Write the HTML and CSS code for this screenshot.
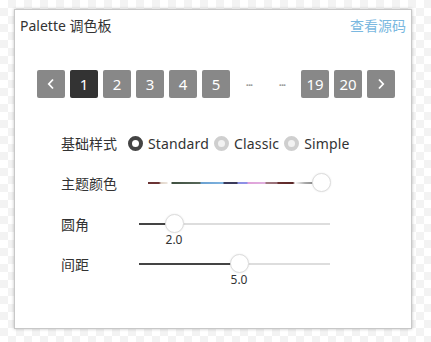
FILE: index.html
```html
<!DOCTYPE html>
<html>
<head>
<meta charset="utf-8">
<link rel="stylesheet" href="styles.css">
</head>
<body>
<div class="card">
  <div class="header">
    <span class="title">Palette 调色板</span>
    <span class="source">查看源码</span>
  </div>
  <div class="pager">
    <span class="pg nav"><svg width="10" height="12" viewBox="0 0 10 12"><path d="M7 1.5 L2.8 6 L7 10.5" fill="none" stroke="#fff" stroke-width="1.8"/></svg></span>
    <span class="pg active">1</span>
    <span class="pg">2</span>
    <span class="pg">3</span>
    <span class="pg">4</span>
    <span class="pg">5</span>
    <span class="pg dots">···</span>
    <span class="pg dots">···</span>
    <span class="pg">19</span>
    <span class="pg">20</span>
    <span class="pg nav"><svg width="10" height="12" viewBox="0 0 10 12"><path d="M3 1.5 L7.2 6 L3 10.5" fill="none" stroke="#fff" stroke-width="1.8"/></svg></span>
  </div>
  <div class="form">
    <div class="row radios-row">
      <span class="label">基础样式</span>
      <div class="radios">
        <span class="radio checked"><i></i>Standard</span>
        <span class="radio"><i></i>Classic</span>
        <span class="radio"><i></i>Simple</span>
      </div>
    </div>
    <div class="row theme-row">
      <span class="label">主题颜色</span>
      <div class="slider theme">
        <div class="theme-track"></div>
        <span class="thumb" style="left: 182px"></span>
      </div>
    </div>
    <div class="row slider-row">
      <span class="label">圆角</span>
      <div class="slider">
        <div class="track"><div class="fill" style="width: 35px"></div></div>
        <span class="thumb" style="left: 35px"></span>
        <span class="value" style="left: 35px">2.0</span>
      </div>
    </div>
    <div class="row slider-row">
      <span class="label">间距</span>
      <div class="slider">
        <div class="track"><div class="fill" style="width: 100px"></div></div>
        <span class="thumb" style="left: 100px"></span>
        <span class="value" style="left: 100px">5.0</span>
      </div>
    </div>
  </div>
</div>
</body>
</html>
```
FILE: styles.css
```css
html, body {
  margin: 0;
  padding: 0;
}
body {
  width: 431px;
  height: 342px;
  overflow: hidden;
  font-family: "Noto Sans", "Noto Sans CJK SC", sans-serif;
  color: #333;
  background-color: #fff;
  background-image:
    linear-gradient(45deg, #f3f3f3 25%, transparent 25%, transparent 75%, #f3f3f3 75%),
    linear-gradient(45deg, #f3f3f3 25%, transparent 25%, transparent 75%, #f3f3f3 75%);
  background-size: 16px 16px;
  background-position: 0 0, 8px 8px;
  padding-top: 9px;
  padding-left: 14px;
  box-sizing: border-box;
}
.card {
  width: 398px;
  height: 320px;
  box-sizing: border-box;
  background: #fff;
  border: 1px solid #c8c8c8;
  box-shadow: 0 0 3px rgba(0,0,0,0.25);
}
.header {
  display: flex;
  justify-content: space-between;
  align-items: center;
  padding: 4px 5px 0 5px;
  height: 22px;
}
.title {
  font-size: 14px;
  color: #333;
}
.source {
  font-size: 14px;
  color: #7ab8e0;
}
.pager {
  display: flex;
  gap: 5px;
  margin-top: 34px;
  padding-left: 22px;
}
.pg {
  width: 28px;
  height: 28px;
  box-sizing: border-box;
  border-radius: 2px;
  background: #888;
  color: #fff;
  font-size: 15px;
  display: flex;
  align-items: center;
  justify-content: center;
  font-family: "Noto Sans", sans-serif;
}
.pg.active {
  background: #333;
}
.pg.dots {
  background: transparent;
  color: #999;
  font-size: 11px;
  letter-spacing: -1px;
  font-weight: bold;
}
.form {
  margin-top: 29px;
  padding-left: 46px;
}
.row {
  display: flex;
  align-items: center;
  font-size: 14px;
}
.label {
  width: 78px;
  flex: none;
}
.radios-row {
  height: 32px;
}
.radios {
  display: flex;
  margin-left: -11px;
}
.radio {
  display: flex;
  align-items: center;
  margin-right: 5px;
  color: #333;
  letter-spacing: 0.15px;
}
.radio i {
  display: inline-block;
  width: 15px;
  height: 15px;
  box-sizing: border-box;
  border-radius: 50%;
  border: 4px solid #cfcfcf;
  background: #f2f2f2;
  margin-right: 5px;
}
.radio.checked i {
  border-color: #444;
  background: #fff;
}
.theme-row {
  height: 20px;
  margin-top: 14px;
}
.slider {
  position: relative;
  width: 191px;
  height: 20px;
}
.theme-track {
  position: absolute;
  left: 9px;
  top: 9px;
  width: 166px;
  height: 2px;
  background: linear-gradient(90deg,
    #6b3434 0px, #6b3434 11px,
    #e0d4c8 13px, #ece4dc 19px,
    #fff 20px, #fff 23px,
    #405040 24px, #57685a 52px,
    #6aa0d0 53px, #80b4e0 75px,
    #3a3a5a 76px, #3a3a5a 89px,
    #8a90e0 90px, #9090e8 99px,
    #e0a0d8 100px, #e0b0e0 117px,
    #a07880 118px, #987078 129px,
    #6a3030 130px, #5a2828 145px,
    #fff 147px, #aaa 157px, #888 166px);
}
.thumb {
  position: absolute;
  top: 0;
  width: 19px;
  height: 19px;
  box-sizing: border-box;
  margin-left: -9.5px;
  border-radius: 50%;
  background: #fff;
  border: 1px solid #ddd;
  box-shadow: 0 0 2px rgba(0,0,0,0.1);
}
.track {
  position: absolute;
  left: 0;
  right: 0;
  top: 9px;
  height: 2px;
  background: #ddd;
}
.fill {
  height: 2px;
  background: #444;
}
.slider-row {
  height: 20px;
}
.slider-row:nth-child(3) {
  margin-top: 21px;
}
.slider-row:nth-child(4) {
  margin-top: 20px;
}
.value {
  position: absolute;
  top: 17px;
  transform: translateX(-50%);
  font-size: 12px;
  color: #333;
}
```
